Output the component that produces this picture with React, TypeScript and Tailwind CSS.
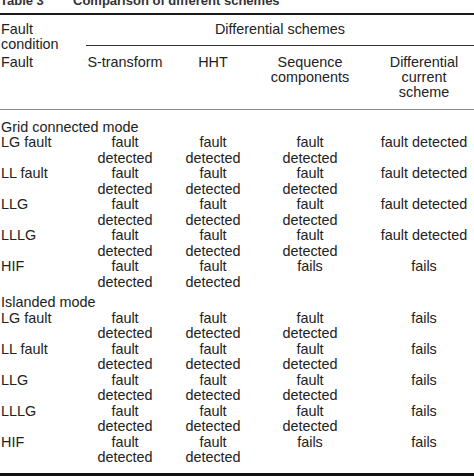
import React from "react";

type Row = { label: string; s: string; h: string; seq: string; diff: string };

const grid: Row[] = [
  { label: "LG fault", s: "fd", h: "fd", seq: "fd", diff: "fault detected" },
  { label: "LL fault", s: "fd", h: "fd", seq: "fd", diff: "fault detected" },
  { label: "LLG", s: "fd", h: "fd", seq: "fd", diff: "fault detected" },
  { label: "LLLG", s: "fd", h: "fd", seq: "fd", diff: "fault detected" },
  { label: "HIF", s: "fd", h: "fd", seq: "fails", diff: "fails" },
];

const island: Row[] = [
  { label: "LG fault", s: "fd", h: "fd", seq: "fd", diff: "fails" },
  { label: "LL fault", s: "fd", h: "fd", seq: "fd", diff: "fails" },
  { label: "LLG", s: "fd", h: "fd", seq: "fd", diff: "fails" },
  { label: "LLLG", s: "fd", h: "fd", seq: "fd", diff: "fails" },
  { label: "HIF", s: "fd", h: "fd", seq: "fails", diff: "fails" },
];

function Cell({ v }: { v: string }) {
  if (v === "fd")
    return (
      <div className="text-center">
        fault
        <br />
        detected
      </div>
    );
  return <div className="text-center whitespace-nowrap">{v}</div>;
}

function DataRow({ r }: { r: Row }) {
  return (
    <div className="grid grid-cols-[86px_78px_98px_96px_116px] h-[31px]">
      <div className="pl-[1px]">{r.label}</div>
      <Cell v={r.s} />
      <Cell v={r.h} />
      <Cell v={r.seq} />
      <div className="pl-4">
        <Cell v={r.diff} />
      </div>
    </div>
  );
}

export default function App() {
  return (
    <div
      className="w-[474px] h-[476px] overflow-hidden bg-white text-[#222] text-[14.4px]"
      style={{ fontFamily: '"Liberation Sans", Arial, sans-serif' }}
    >
      <div className="h-[13px] overflow-hidden">
        <div className="mt-[-6px] flex text-[13px] leading-[13px] font-bold text-[#333]">
          <span className="w-[73px]">Table 3</span>
          <span>Comparison of different schemes</span>
        </div>
      </div>
      <div className="border-t-2 border-[#1a1a1a] border-b border-b-[#8a8a8a]">
        <div className="flex h-[31px] leading-[15px]">
          <div className="w-[86px] pt-[7px] pl-[1px] whitespace-nowrap">
            Fault
            <br />
            condition
          </div>
          <div className="flex-1 pt-[7px] text-center border-b border-[#333]">
            Differential schemes
          </div>
        </div>
        <div className="grid grid-cols-[86px_78px_98px_96px_116px] leading-[15px] pt-[9px] pb-[9px]">
          <div className="pl-[1px]">Fault</div>
          <div className="text-center whitespace-nowrap">S-transform</div>
          <div className="text-center">HHT</div>
          <div className="text-center">
            Sequence
            <br />
            components
          </div>
          <div className="text-center pl-4">
            Differential
            <br />
            current
            <br />
            scheme
          </div>
        </div>
      </div>
      <div className="leading-[15.5px] pt-[9.5px] h-[363px]">
        <div className="pl-[1px]">Grid connected mode</div>
        {grid.map((r, i) => (
          <DataRow key={"g" + i} r={r} />
        ))}
        <div className="pl-[1px] mt-[5px]">Islanded mode</div>
        {island.map((r, i) => (
          <DataRow key={"i" + i} r={r} />
        ))}
      </div>
      <div className="border-t-[3px] border-[#111]" />
    </div>
  );
}
